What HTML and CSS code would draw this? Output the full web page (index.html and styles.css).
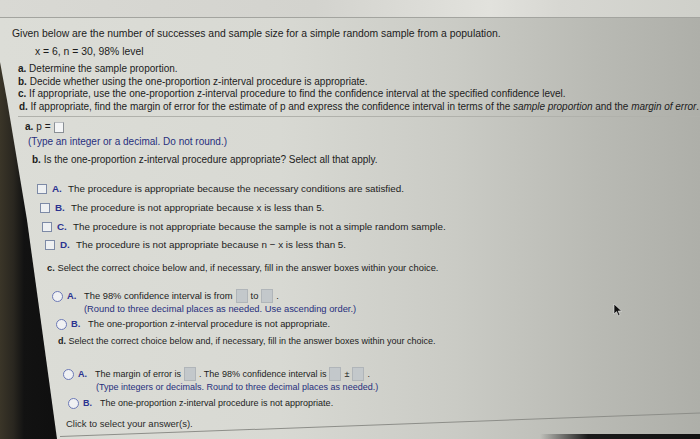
FILE: index.html
```html
<!DOCTYPE html>
<html lang="en">
<head>
<meta charset="utf-8">
<title>One-proportion z-interval</title>
<link rel="stylesheet" href="styles.css">
</head>
<body>
<div class="topband"></div>
<section class="question">
  <p class="intro">Given below are the number of successes and sample size for a simple random sample from a population.</p>
  <p class="data">x = 6, n = 30, 98% level</p>
  <ul class="tasks">
    <li><b>a.</b> Determine the sample proportion.</li>
    <li><b>b.</b> Decide whether using the one-proportion z-interval procedure is appropriate.</li>
    <li><b>c.</b> If appropriate, use the one-proportion z-interval procedure to find the confidence interval at the specified confidence level.</li>
    <li class="long"><b>d.</b> If appropriate, find the margin of error for the estimate of p and express the confidence interval in terms of the <i>sample proportion</i> and the <i>margin of error</i>.</li>
  </ul>
</section>
<section class="answers">
  <div class="part-a"><b>a.</b> p = <span class="box empty"></span></div>
  <div class="hint hint-a">(Type an integer or a decimal. Do not round.)</div>

  <div class="part-b"><b>b.</b> Is the one-proportion z-interval procedure appropriate? Select all that apply.</div>
  <ul class="checks">
    <li><span class="cb"></span><span class="lbl">A.</span>The procedure is appropriate because the necessary conditions are satisfied.</li>
    <li><span class="cb"></span><span class="lbl">B.</span>The procedure is not appropriate because x is less than 5.</li>
    <li><span class="cb"></span><span class="lbl">C.</span>The procedure is not appropriate because the sample is not a simple random sample.</li>
    <li><span class="cb"></span><span class="lbl">D.</span>The procedure is not appropriate because n &minus; x is less than 5.</li>
  </ul>

  <div class="sec-c">
    <div class="part-c"><b>c.</b> Select the correct choice below and, if necessary, fill in the answer boxes within your choice.</div>
    <div class="radios radios-c">
      <div class="opt opt-a"><span class="rd"></span><span class="lbl">A.</span>The 98% confidence interval is from <span class="box fill"></span> to <span class="box fill"></span>.</div>
      <div class="hint hint-c">(Round to three decimal places as needed. Use ascending order.)</div>
      <div class="opt opt-b"><span class="rd"></span><span class="lbl">B.</span>The one-proportion z-interval procedure is not appropriate.</div>
    </div>
  </div>

  <div class="sec-d">
    <div class="part-d"><b>d.</b> Select the correct choice below and, if necessary, fill in the answer boxes within your choice.</div>
    <div class="radios radios-d">
      <div class="opt opt-a"><span class="rd"></span><span class="lbl">A.</span>The margin of error is <span class="box fill"></span>. The 98% confidence interval is <span class="box fill"></span> &plusmn; <span class="box fill"></span>.</div>
      <div class="hint hint-d">(Type integers or decimals. Round to three decimal places as needed.)</div>
      <div class="opt opt-b"><span class="rd"></span><span class="lbl">B.</span>The one-proportion z-interval procedure is not appropriate.</div>
    </div>
  </div>

  <div class="footer">Click to select your answer(s).</div>
</section>

<div class="bezel"></div>
<div class="bezel-bottom"></div>
<svg class="cursor" width="10" height="14" viewBox="0 0 10 14" aria-hidden="true">
  <path d="M1 1 L1 11 L3.5 8.6 L5.4 12.8 L7 12.1 L5.2 8 L8.6 8 Z" fill="#111" stroke="#eee" stroke-width="0.6"/>
</svg>
</body>
</html>
```

FILE: styles.css
```css
* {
  box-sizing: border-box;
  margin: 0;
  padding: 0;
}

html, body {
  width: 700px;
  height: 439px;
  overflow: hidden;
}

body {
  position: relative;
  font-family: "Liberation Sans", Arial, sans-serif;
  font-size: 10px;
  color: #1c1c1c;
  background: linear-gradient(90deg, #dcddd7 0%, #d8d9d3 40%, #cacbc5 65%, #b9bab4 85%, #aeafa9 100%);
}

.topband {
  height: 18px;
  background: linear-gradient(90deg, #d9d9d4 0%, #d3d3ce 45%, #e2e2dd 70%, #d7d7d2 80%, #cfd0ca 100%);
  border-bottom: 1px solid #a3a49f;
}

/* ---------- question text ---------- */
.question {
  border-bottom: 1px solid #b0b1ab;
  margin-left: 18px;
  padding-bottom: 3px;
}

.intro {
  font-size: 10.4px;
  line-height: 12px;
  margin-top: 10px;
  margin-left: -6px;
  white-space: nowrap;
}

.data {
  font-size: 10.4px;
  line-height: 12px;
  margin-top: 6px;
  padding-left: 17px;
}

.tasks {
  list-style: none;
  margin-top: 5px;
  line-height: 12.5px;
  white-space: nowrap;
}

.tasks .long {
  letter-spacing: -0.03px;
  padding-left: 1px;
}

.tasks b,
.part-a b,
.part-b b,
.part-c b,
.part-d b {
  font-weight: bold;
}

/* ---------- answers ---------- */
.answers {
  line-height: 12px;
  white-space: nowrap;
}

.part-a {
  margin-top: 4px;
  padding-left: 25px;
  display: flex;
  align-items: center;
  gap: 3px;
}

.hint {
  color: #272f7d;
}

.hint-a {
  margin-top: 3px;
  padding-left: 28px;
}

.part-b {
  margin-top: 6px;
  padding-left: 32px;
}

.checks {
  list-style: none;
  margin-top: 17px;
  display: flex;
  flex-direction: column;
  gap: 6.8px;
}

.checks li {
  display: flex;
  align-items: center;
  height: 12px;
  font-size: 9.85px;
}

.checks li:nth-child(1) { padding-left: 37px; }
.checks li:nth-child(2) { padding-left: 40px; }
.checks li:nth-child(3) { padding-left: 42px; }
.checks li:nth-child(4) { padding-left: 45px; }

.cb {
  width: 10px;
  height: 10px;
  border: 1px solid #7d8aa6;
  background: #eef0f2;
  margin-right: 5px;
  flex: none;
}

.lbl {
  color: #2b3290;
  font-weight: bold;
  width: 16px;
  flex: none;
}

/* section c is a little smaller (farther from the camera) */
.sec-c {
  font-size: 9.35px;
}

.part-c {
  margin-top: 11px;
  padding-left: 47px;
}

.radios {
  display: flex;
  flex-direction: column;
}

.radios-c {
  margin-top: 16px;
  padding-left: 52px;
}

.opt {
  display: flex;
  align-items: center;
  height: 12px;
}

.opt .lbl {
  width: 17px;
}

.rd {
  width: 11px;
  height: 11px;
  border: 1.3px solid #6c79b6;
  border-radius: 50%;
  background: #f0f1f3;
  margin-right: 4px;
  flex: none;
}

.radios-c .hint-c {
  margin-top: 1px;
  padding-left: 32px;
}

.radios-c .opt-b {
  margin-top: 3px;
  padding-left: 4px;
}

/* section d is smaller still */
.sec-d {
  font-size: 9px;
}

.part-d {
  margin-top: 5px;
  padding-left: 58px;
}

.radios-d {
  margin-top: 21px;
  padding-left: 63px;
}

.radios-d .hint-d {
  margin-top: 1px;
  padding-left: 33px;
}

.radios-d .opt-b {
  margin-top: 4px;
  padding-left: 5px;
}

.box {
  display: inline-block;
  flex: none;
}

.box.empty {
  width: 10px;
  height: 11px;
  border: 1px solid #8a8f95;
  border-top-color: #b9bcc0;
  background: #f4f5f6;
}

.box.fill {
  width: 12px;
  height: 14px;
  background: #c3c8cb;
  border: 1px solid #b0b5b9;
  margin: 0 3px;
}

.footer {
  position: relative;
  margin-top: 9px;
  margin-left: 60px;
  padding-left: 6px;
  padding-bottom: 7px;
  font-size: 9.5px;
  color: #2a2a2a;
}

/* the rule under the footer appears tilted in the photo */
.footer::after {
  content: "";
  position: absolute;
  left: 0;
  bottom: 0;
  width: 645px;
  height: 1px;
  background: #8d8e89;
  transform-origin: left center;
  transform: rotate(-2.1deg);
}

/* ---------- photo artefacts over the page ---------- */
.bezel {
  position: absolute;
  left: 0;
  top: 0;
  width: 60px;
  height: 439px;
  background: linear-gradient(90deg, #3a3528 0%, #2a2720 22%, #121212 40%, #0f0f0f 100%);
  clip-path: polygon(0 62px, 7px 100px, 27px 220px, 38px 300px, 57px 439px, 0 439px);
}

.bezel-bottom {
  position: absolute;
  left: 540px;
  bottom: 0;
  width: 160px;
  height: 5px;
  background: linear-gradient(90deg, rgba(20,20,20,0), #1a1a1a 30%, #111 100%);
}

.cursor {
  position: absolute;
  left: 613px;
  top: 303px;
}
```
